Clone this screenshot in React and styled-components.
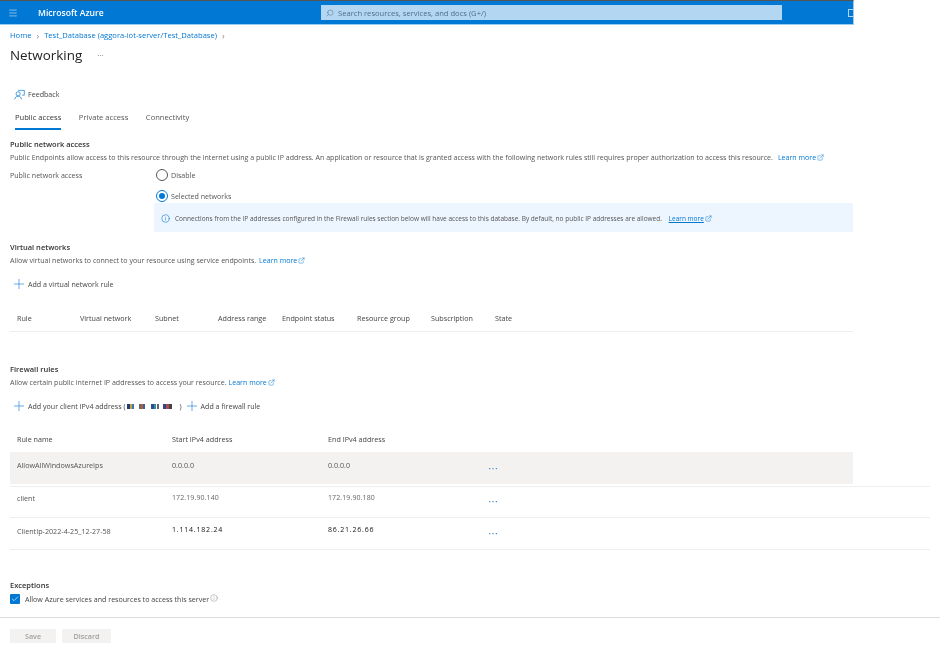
import React from 'react'
import styled, { createGlobalStyle } from 'styled-components'
import { Search, Info, ExternalLink, Check, Menu } from 'lucide-react'

const GlobalStyle = createGlobalStyle`
    html, body { margin: 0; padding: 0; background: #fff; }
    body { font-family: "Open Sans", "Noto Sans", sans-serif; font-size: 7.1px; color: #444; overflow: hidden; }
    * { box-sizing: border-box; }
`

const Page = styled.div`
    width: 940px; height: 657px; overflow: hidden; display: flex; flex-direction: column; filter: blur(0.25px);
`

const TopBar = styled.header`
    width: 854px; height: 25px; flex: none; background: #0078d4; display: flex; align-items: center;
    border-top: 1px solid #555; border-bottom: 1px solid #9ccbf0; border-right: 1px solid #9ccbf0;
    color: #fff;
`

const Burger = styled.span`
    width: 38px; padding-left: 8px; display: flex; color: #cfe4f7;
`

const Brand = styled.div`
    width: 283px; font-size: 8.6px; font-weight: 600;
`

const SearchBox = styled.div`
    width: 461px; height: 15px; background: #b3d6f2; display: flex; align-items: center; gap: 4px;
    padding-left: 5px; color: #4f6f8c; font-size: 7.6px;
`

const Directory = styled.span`
    margin-left: 66px; width: 5px; height: 8px; border: 1px solid #b3d6f2; border-right: 0;
`

const Body = styled.main`
    padding-left: 10px; flex: 1; display: flex; flex-direction: column;
`

const Crumbs = styled.nav`
    height: 20px; display: flex; align-items: center; gap: 5px; color: #0078d4; font-size: 7.6px;
    span { color: #888; font-size: 9px; }
`

const TitleRow = styled.div`
    height: 19px; display: flex; align-items: center; gap: 15px;
`

const Title = styled.h1`
    margin: 0; font-size: 13.4px; font-weight: 500; color: #222;
`

const TitleDots = styled.span`
    color: #777; font-size: 8px; line-height: 8px; margin-top: -3px;
`

const Feedback = styled.div`
    margin-top: 21px; height: 18px; padding-left: 4px; display: flex; align-items: center; gap: 3px; font-size: 7.1px; color: #444;
`

const Tabs = styled.div`
    margin-top: 2px; height: 25px; display: flex; gap: 17.5px; padding-left: 5px;
`

const Tab = styled.div`
    height: 25px; line-height: 25px; color: ${p => (p.$active ? '#333' : '#555')}; font-weight: ${p => (p.$active ? 500 : 400)};
    border-bottom: 2px solid ${p => (p.$active ? '#0078d4' : 'transparent')}; font-size: 7.6px;
`

const Heading = styled.h2`
    margin: 0; height: 13px; line-height: 13px; font-size: 7.5px; font-weight: 600; color: #333;
`

const Desc = styled.p`
    margin: 0; height: 13px; line-height: 13px; font-size: 7.05px; color: #555; white-space: nowrap;
    display: flex; align-items: center; gap: ${p => p.$gap || 3}px;
`

const Learn = styled.a`
    color: #0078d4; display: inline-flex; align-items: center; gap: 1px;
    text-decoration: ${p => (p.$under ? 'underline' : 'none')};
`

const AccessRow = styled.div`
    display: flex; margin-top: 1px;
`

const AccessLabel = styled.div`
    width: 144px; height: 20px; line-height: 20px; font-size: 7.1px; color: #555;
`

const Options = styled.div`
    display: flex; flex-direction: column; margin-top: -1px;
`

const Option = styled.label`
    height: 21px; margin-left: 2px; display: flex; align-items: center; gap: 3px; font-size: 7.1px; color: #555;
`

const Radio = styled.span`
    width: 12px; height: 12px; border-radius: 50%; border: 1px solid ${p => (p.$on ? '#0078d4' : '#555')};
    display: flex; align-items: center; justify-content: center;
    &::after {
        content: ""; width: 6px; height: 6px; border-radius: 50%; background: ${p => (p.$on ? '#0078d4' : 'transparent')};
    }
`

const InfoBox = styled.div`
    width: 699px; height: 29px; margin-top: -3px; background: #edf5fe; display: flex; align-items: center; gap: 5px;
    padding: 1px 0 0 7px; font-size: 6.5px; color: #555; white-space: nowrap;
`

const Section = styled.section`
    margin-top: ${p => p.$top}px;
`

const AddBar = styled.div`
    margin-top: 5px; height: 24px; padding-left: 4px; display: flex; align-items: center; gap: 5px;
`

const AddButton = styled.div`
    display: flex; align-items: center; gap: 4px; font-size: 7.1px; color: #444;
`

const Mosaic = styled.svg`
    width: 52px; height: 7px; margin: 0 1px; vertical-align: -1px; filter: blur(0.4px);
`

const VnetHead = styled.div`
    margin-top: 12px; width: 843px; height: 24px; border-bottom: 1px solid #eee; display: grid; align-items: center;
    grid-template-columns: 63px 75px 63px 64px 75px 74px 64px 1fr; padding: 0 0 4px 7px; font-size: 7.2px; color: #444;
`

const FwGrid = styled.div`
    display: grid; grid-template-columns: 155px 156px 160px 1fr; align-items: center; padding-left: 7px;
`

const FwHead = styled(FwGrid)`
    margin-top: 8px; width: 843px; height: 26px; font-size: 7.2px; color: #444;
`

const FwRow = styled(FwGrid)`
    height: 32px; width: ${p => (p.$selected ? '843px' : '920px')};
    background: ${p => (p.$selected ? '#f3f2f1' : '#fff')};
    border-bottom: ${p => (p.$selected ? '0' : '1px solid #eee')};
    margin-bottom: ${p => (p.$selected ? '2px' : '0')};
    border-top: ${p => (p.$first ? '1px solid #eee' : '0')};
    font-size: 7.2px; color: #555; padding-bottom: ${p => (p.$first ? '9px' : '6px')};
`

const Redacted = styled.span`
    filter: blur(0.6px); font-size: 7px; color: ${p => (p.$dark ? '#111' : '#666')}; letter-spacing: ${p => (p.$dark ? '0.8px' : '0.1px')};
    margin: ${p => (p.$dark ? '-2px 0 0 0' : '0')};
`

const RowDots = styled.svg`
    width: 10px; height: 3px; margin: ${p => (p.$top || 3)}px 0 0 0; fill: #3b92dc;
`

const CheckRow = styled.div`
    height: 14px; display: flex; align-items: center; gap: 5px; font-size: 7.1px; color: #444;
`

const CheckBox = styled.span`
    width: 10px; height: 10px; background: #0078d4; border-radius: 1px; display: flex; align-items: center; justify-content: center; color: #fff;
`

const Footer = styled.footer`
    height: 40px; flex: none; border-top: 1px solid #ddd; padding: 11px 0 0 10px; display: flex; gap: 6px; align-items: flex-start;
`

const Btn = styled.button`
    width: ${p => p.$w}px; height: 14px; border: 0; padding: 0; background: #f3f2f1; color: #a19f9d;
    font: 600 7.2px "Open Sans", sans-serif;
`

const OutIcon = () => <ExternalLink size={7} strokeWidth={1.6} />

const PlusIcon = () => (
    <svg width="10" height="10" viewBox="0 0 10 10" stroke="#2b88d8" strokeWidth="0.7">
        <path d="M5 0v10M0 5h10" />
    </svg>
)

const FeedbackIcon = () => (
    <svg width="11" height="11" viewBox="0 0 16 16" fill="none" stroke="#0078d4" strokeWidth="1">
        <circle cx="6" cy="7" r="3" />
        <path d="M1 15c.5-3 2.500-4.500 5-4.500s4.500 1.500 5 4.500" />
        <path d="M6 2h9v7h-3" />
    </svg>
)

const Dots = ({ top }) => (
    <RowDots viewBox="0 0 10 3" $top={top}>
        <rect x="1" y="1" width="1.2" height="1.2" />
        <rect x="4.400" y="1" width="1.2" height="1.2" />
        <rect x="7.800" y="1" width="1.2" height="1.2" />
    </RowDots>
)

const blocks = [
    [0, 3, '#1c3f7c'], [3, 2, '#c9a23a'], [5, 2, '#3c78b4'], [12, 2, '#666'], [14, 2, '#c05a30'], [16, 2, '#2d6aa5'],
    [24, 3, '#27508f'], [27, 2, '#3a8ab0'], [30, 2, '#666'], [36, 3, '#2b4a87'], [39, 3, '#b04a50'], [42, 3, '#444'],
]

const Mixed = () => (
    <Mosaic viewBox="0 0 52 7">
        {blocks.map(([x, w, c]) => <rect key={x} x={x} y="1" width={w} height="5" fill={c} />)}
    </Mosaic>
)

const vnetCols = ['Rule', 'Virtual network', 'Subnet', 'Address range', 'Endpoint status', 'Resource group', 'Subscription', 'State']

const rows = [
    { name: 'client', start: '172.19.90.140', end: '172.19.90.180', dots: 8 },
    { name: 'ClientIp-2022-4-25_12-27-58', start: '1.114.182.24', end: '86.21.26.66', dark: true, dots: 5 },
]

function App() {
    return (
        <Page>
            <GlobalStyle />
            <TopBar>
                <Burger><Menu size={10} strokeWidth={1.5} /></Burger>
                <Brand>Microsoft Azure</Brand>
                <SearchBox>
                    <Search size={8} strokeWidth={1.5} style={{ transform: 'scaleX(-1)' }} />
                    Search resources, services, and docs (G+/)
                </SearchBox>
                <Directory />
            </TopBar>
            <Body>
                <Crumbs>
                    Home <span>›</span> Test_Database (aggora-iot-server/Test_Database) <span>›</span>
                </Crumbs>
                <TitleRow>
                    <Title>Networking</Title>
                    <TitleDots>...</TitleDots>
                </TitleRow>
                <Feedback><FeedbackIcon /> Feedback</Feedback>
                <Tabs>
                    <Tab $active>Public access</Tab>
                    <Tab>Private access</Tab>
                    <Tab>Connectivity</Tab>
                </Tabs>

                <Section $top={8}>
                    <Heading>Public network access</Heading>
                    <Desc $gap={5}>
                        Public Endpoints allow access to this resource through the internet using a public IP address. An application or resource that is granted access with the following network rules still requires proper authorization to access this resource.
                        <Learn>Learn more<OutIcon /></Learn>
                    </Desc>
                    <AccessRow>
                        <AccessLabel>Public network access</AccessLabel>
                        <Options>
                            <Option><Radio /> Disable</Option>
                            <Option><Radio $on /> Selected networks</Option>
                            <InfoBox>
                                <Info size={9} color="#0078d4" strokeWidth={1.5} />
                                Connections from the IP addresses configured in the Firewall rules section below will have access to this database. By default, no public IP addresses are allowed.&nbsp;
                                <Learn $under>Learn more<OutIcon /></Learn>
                            </InfoBox>
                        </Options>
                    </AccessRow>
                </Section>

                <Section $top={9}>
                    <Heading>Virtual networks</Heading>
                    <Desc>
                        Allow virtual networks to connect to your resource using service endpoints.
                        <Learn>Learn more<OutIcon /></Learn>
                    </Desc>
                    <AddBar>
                        <AddButton><PlusIcon />Add a virtual network rule</AddButton>
                    </AddBar>
                    <VnetHead>
                        {vnetCols.map(c => <div key={c}>{c}</div>)}
                    </VnetHead>
                </Section>

                <Section $top={31}>
                    <Heading>Firewall rules</Heading>
                    <Desc $gap={2}>
                        Allow certain public internet IP addresses to access your resource.
                        <Learn>Learn more<OutIcon /></Learn>
                    </Desc>
                    <AddBar>
                        <AddButton><PlusIcon /><span>Add your client IPv4 address (<Mixed />)</span></AddButton>
                        <AddButton><PlusIcon />Add a firewall rule</AddButton>
                    </AddBar>
                    <FwHead>
                        <div>Rule name</div>
                        <div>Start IPv4 address</div>
                        <div>End IPv4 address</div>
                    </FwHead>
                    <FwRow $selected>
                        <div>AllowAllWindowsAzureIps</div>
                        <div>0.0.0.0</div>
                        <div>0.0.0.0</div>
                        <Dots top={6} />
                    </FwRow>
                    {rows.map((r, i) => (
                        <FwRow key={r.name} $first={i === 0}>
                            <div>{r.name}</div>
                            <Redacted $dark={r.dark}>{r.start}</Redacted>
                            <Redacted $dark={r.dark}>{r.end}</Redacted>
                            <Dots top={r.dots} />
                        </FwRow>
                    ))}
                </Section>

                <Section $top={29}>
                    <Heading>Exceptions</Heading>
                    <CheckRow>
                        <CheckBox><Check size={8} strokeWidth={2} /></CheckBox>
                        Allow Azure services and resources to access this server
                        <Info size={8} strokeWidth={1.1} color="#666" style={{ marginTop: -3, marginLeft: -4 }} />
                    </CheckRow>
                </Section>
            </Body>
            <Footer>
                <Btn $w={46}>Save</Btn>
                <Btn $w={49}>Discard</Btn>
            </Footer>
        </Page>
    )
}

export default App
